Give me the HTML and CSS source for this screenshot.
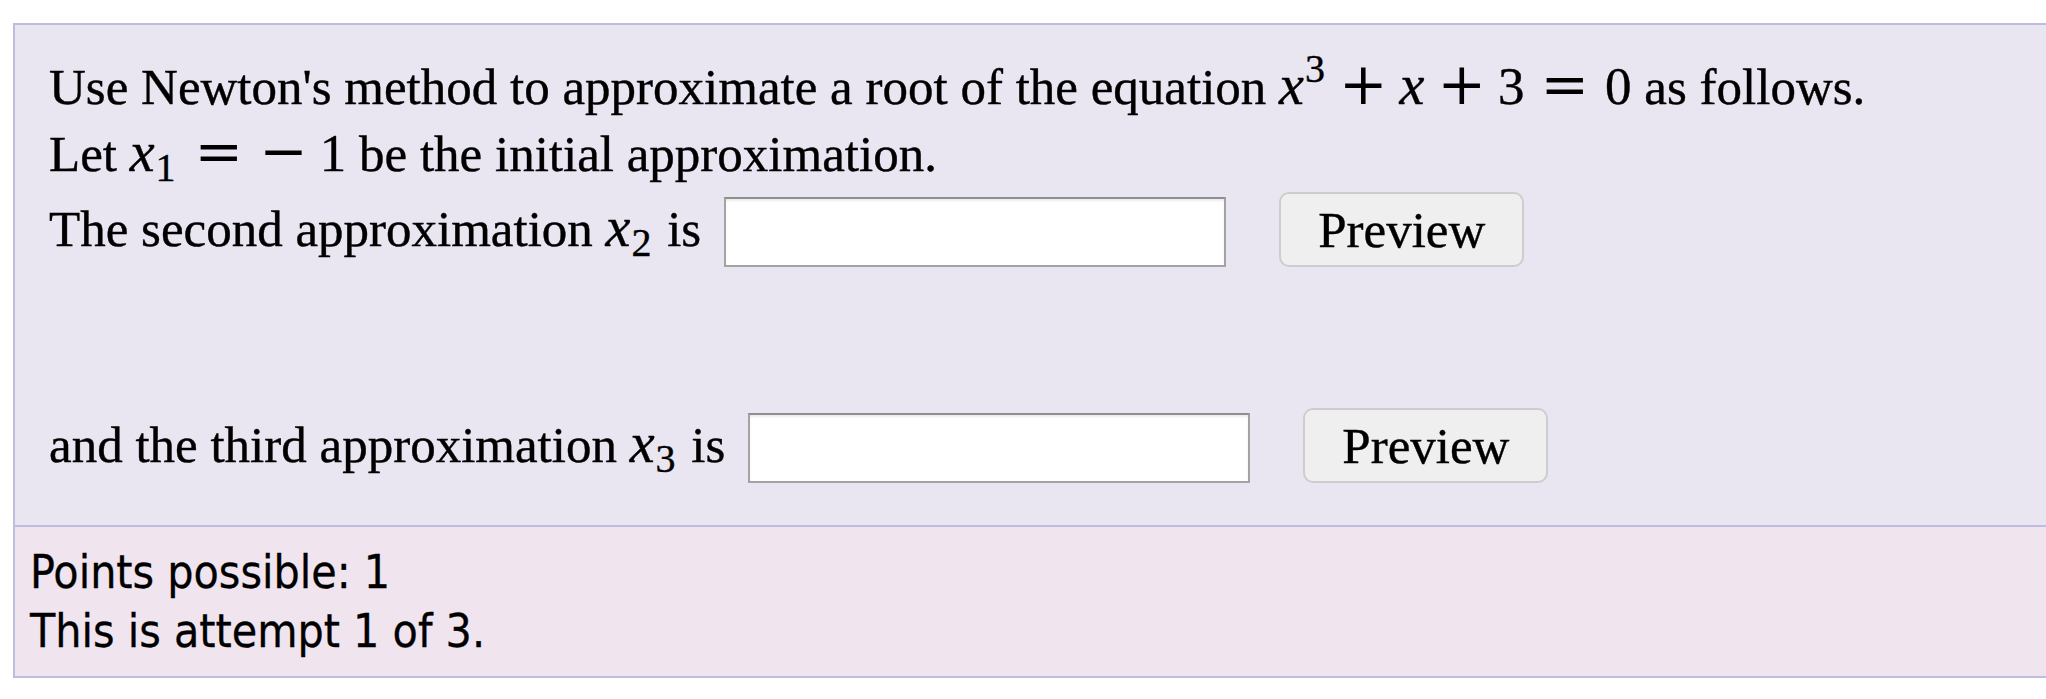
FILE: index.html
```html
<!DOCTYPE html>
<html>
<head>
<meta charset="utf-8">
<link rel="stylesheet" href="styles.css">
</head>
<body>
<div class="page">
  <div class="panel">
    <div class="question">
      <p class="line">Use Newton's method to approximate a root of the equation <span class="math"><span class="mi">x</span><sup class="sup">3</sup><span class="mo bin">+</span><span class="mi">x</span><span class="mo bin">+</span><span class="mn">3</span><span class="mo rel">=</span><span class="mn">0</span></span> as follows.</p>
      <p class="line">Let <span class="math"><span class="mi">x</span><sub class="sub">1</sub><span class="mo rel">=</span><span class="mo unary">−</span><span class="mn">1</span></span> be the initial approximation.</p>
      <div class="answer-row">
        <span class="label">The second approximation <span class="math"><span class="mi">x</span><sub class="sub">2</sub></span> is</span>
        <input class="answer" type="text">
        <button class="preview" type="button">Preview</button>
      </div>
      <div class="answer-row answer-row--second">
        <span class="label">and the third approximation <span class="math"><span class="mi">x</span><sub class="sub">3</sub></span> is</span>
        <input class="answer" type="text">
        <button class="preview" type="button">Preview</button>
      </div>
    </div>
    <div class="footer">
      <div class="footer-line">Points possible: 1</div>
      <div class="footer-line">This is attempt 1 of 3.</div>
    </div>
  </div>
</div>
</body>
</html>
```

FILE: styles.css
```css
html {
  overflow: hidden;
}

body {
  margin: 0;
  background: #ffffff;
  color: #000000;
}

.page {
  padding: 23px 0 0 13px;
}

.panel {
  width: 2100px;
  border: 2px solid #bdbddf;
  background: #e9e6f2;
}

.question {
  padding: 29px 0 42px 34px;
  font-family: "Liberation Serif", "Times New Roman", serif;
  font-size: 51px;
  -webkit-text-stroke: 0.4px #000;
}

.line {
  margin: 0;
  line-height: 67px;
  white-space: nowrap;
}

.math {
  font-family: "Liberation Serif", "Times New Roman", serif;
}

.mi,
.mn,
.mo {
  line-height: 0;
}

.mi {
  font-style: italic;
  font-size: 56px;
  padding-right: 1px;
}

.mn {
  font-size: 53px;
}

.sup,
.sub {
  font-size: 40px;
  line-height: 0;
}

.sup {
  vertical-align: 22px;
  margin-right: 2px;
}

.sub {
  vertical-align: -10px;
  margin-right: 3px;
}

.mo {
  font-family: "DejaVu Serif", serif;
  font-size: 58px;
  -webkit-text-stroke: 0;
}

.mo.bin {
  margin: 0 12px;
}

.mo.rel {
  margin: 0 16px;
}

.mo.unary {
  margin: 0 12px 0 0;
}

.answer-row {
  display: flex;
  align-items: center;
  margin-top: 4px;
  height: 75px;
}

.answer-row--second {
  margin-top: 141px;
}

.label {
  line-height: 67px;
  white-space: nowrap;
}

.answer {
  width: 502px;
  height: 70px;
  box-sizing: border-box;
  margin: 5px 0 0 23px;
  padding: 0 8px;
  border: 2px solid #a3a3a3;
  border-top-color: #8e8e8e;
  box-shadow: inset 0 2px 2px rgba(0, 0, 0, 0.08);
  background: #ffffff;
  font-family: "Liberation Serif", serif;
  font-size: 40px;
}

.preview {
  width: 245px;
  height: 75px;
  margin-left: 53px;
  border: 2px solid #cdcdcd;
  border-radius: 10px;
  background: #efefef;
  color: #000000;
  font-family: "Liberation Serif", "Times New Roman", serif;
  font-size: 51px;
  -webkit-text-stroke: 0.4px #000;
  padding: 0;
}

.footer {
  border-top: 2px solid #bdbddf;
  background: #f0e4ee;
  padding: 16px 0 15px 15px;
  font-family: "DejaVu Sans Condensed", "DejaVu Sans", sans-serif;
  font-stretch: condensed;
  font-size: 46px;
  line-height: 59px;
  -webkit-text-stroke: 0.3px #000;
}
```
